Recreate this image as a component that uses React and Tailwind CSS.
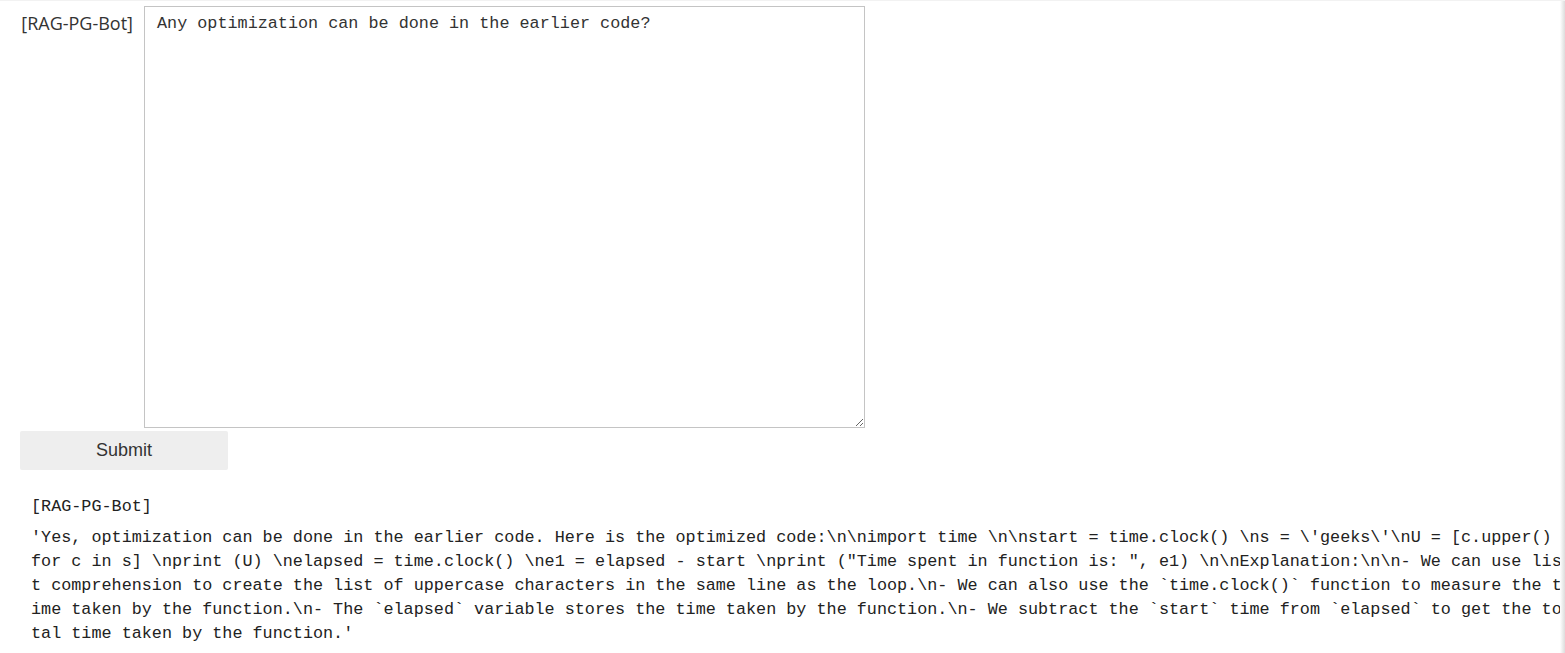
import React, { useState } from 'react';

const answer =
  "'Yes, optimization can be done in the earlier code. Here is the optimized code:\\n\\nimport time \\n\\nstart = time.clock() \\ns = \\'geeks\\'\\nU = [c.upper() for c in s] \\nprint (U) \\nelapsed = time.clock() \\ne1 = elapsed - start \\nprint (\"Time spent in function is: \", e1) \\n\\nExplanation:\\n\\n- We can use list comprehension to create the list of uppercase characters in the same line as the loop.\\n- We can also use the `time.clock()` function to measure the time taken by the function.\\n- The `elapsed` variable stores the time taken by the function.\\n- We subtract the `start` time from `elapsed` to get the total time taken by the function.'";

const mono = { fontFamily: '"Liberation Mono", monospace' };

const App = () => {
  const [question, setQuestion] = useState(
    'Any optimization can be done in the earlier code?',
  );

  return (
    <div className="flex min-h-[653px] w-full bg-white border-t border-[#f2f2f2]">
      <div className="flex-1 min-w-0 pt-[5px]">
        {/* input row */}
        <div className="flex items-start">
          <label
            className="w-[144px] shrink-0 text-right pr-[11px] pt-[5px] text-[18px] leading-[24px] text-[#333]"
            style={{ fontFamily: '"Open Sans", sans-serif' }}
          >
            [RAG-PG-Bot]
          </label>
          <textarea
            className="w-[721px] h-[422px] border border-[#c4c4c4] bg-white pt-[5px] px-[12px] text-[16.8px] leading-[24px] text-[#333] outline-none"
            style={mono}
            value={question}
            onChange={(e) => setQuestion(e.target.value)}
          />
        </div>

        <div className="pl-[20px] mt-[3px]">
          <button
            className="w-[208px] h-[39px] bg-[#eeeeee] rounded-[2px] text-[18px] text-[#333]"
            style={{ fontFamily: '"Liberation Sans", Arial, sans-serif' }}
          >
            Submit
          </button>
        </div>

        {/* output */}
        <div className="pl-[31px] mt-[25px] text-[#222]" style={mono}>
          <div className="text-[16.8px] leading-[24px]">[RAG-PG-Bot]</div>
          <pre
            className="mt-[7px] w-[1532px] text-[16.8px] leading-[24px] whitespace-pre-wrap break-all"
            style={mono}
          >
            {answer}
          </pre>
        </div>
      </div>
      <div className="w-[5px] shrink-0 bg-gradient-to-r from-white to-[#dcdcdc]" />
    </div>
  );
};

export default App;
